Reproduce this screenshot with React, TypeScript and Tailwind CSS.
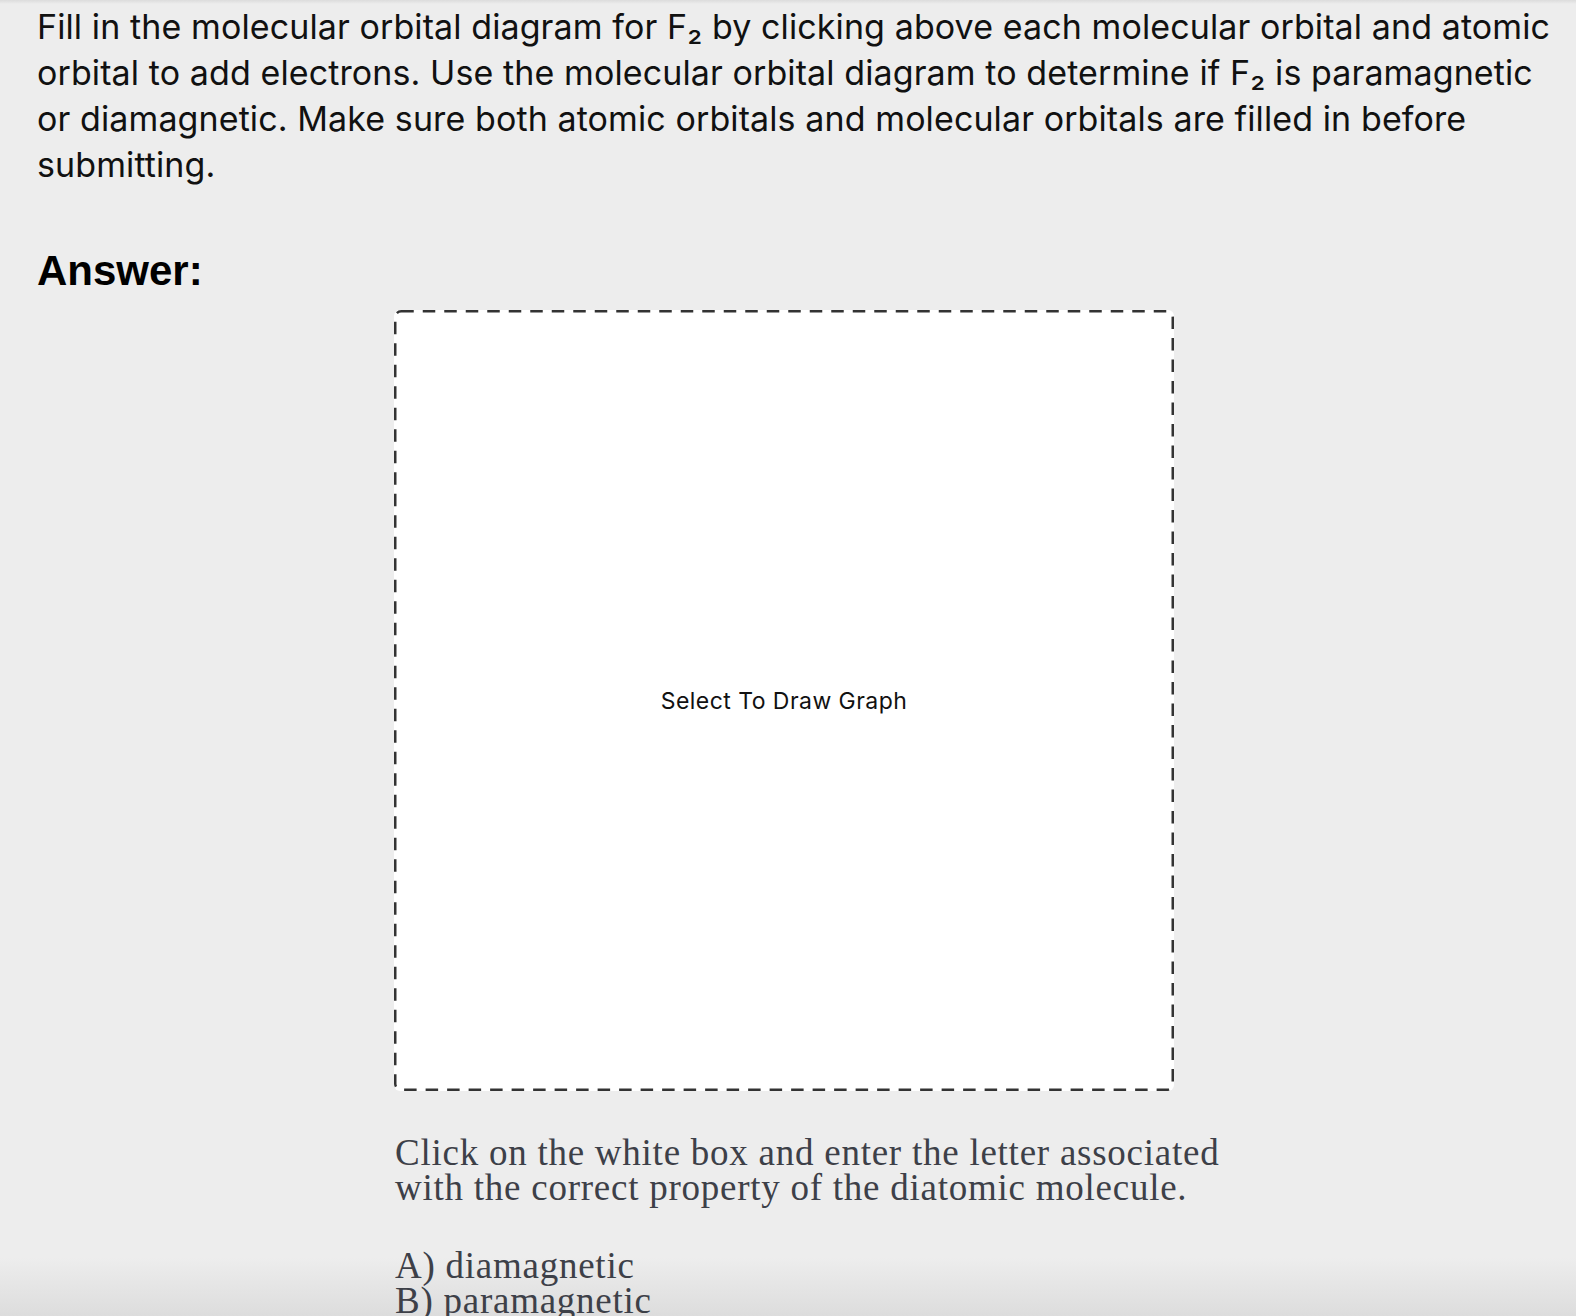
import React from "react";

export default function App() {
  return (
    <div className="relative min-h-[1316px] w-[1576px] overflow-hidden bg-[#ededed]">
      <div className="pointer-events-none absolute inset-x-0 top-0 h-[4px] bg-gradient-to-b from-[#dcdcdc] to-[#ededed]" />
      <div className="pointer-events-none absolute inset-x-0 bottom-0 h-[60px] bg-gradient-to-b from-[#ededed] to-[#dcdcdc]" />
      <div className="relative pl-[37px] pt-[4px]">
        <p className="whitespace-nowrap text-[34px] leading-[46px] text-[#111] [font-family:Inter,'Noto_Sans',sans-serif] tracking-[0.1px]">
          Fill in the molecular orbital diagram for F₂ by clicking above each molecular orbital and atomic
          <br />
          orbital to add electrons. Use the molecular orbital diagram to determine if F₂ is paramagnetic
          <br />
          or diamagnetic. Make sure both atomic orbitals and molecular orbitals are filled in before
          <br />
          submitting.
        </p>
        <h2 className="mt-[58px] text-[42px] font-bold leading-[50px] text-black [font-family:'Liberation_Sans',Arial,sans-serif]">
          Answer:
        </h2>
        <div className="relative ml-[357px] mt-[14px] flex h-[781px] w-[780px] items-center justify-center rounded-[6px] bg-white">
          <svg className="pointer-events-none absolute inset-0" width="780" height="781">
            <rect
              x="1.25"
              y="1.25"
              width="777.5"
              height="778.5"
              rx="6"
              fill="none"
              stroke="#333"
              strokeWidth="2.5"
              strokeDasharray="12.5 9"
            />
          </svg>
          <span className="pt-[2px] text-[23px] tracking-[0.45px] text-[#111] [font-family:Inter,sans-serif]">
            Select To Draw Graph
          </span>
        </div>
        <div className="ml-[358px] mt-[45px] text-[37px] leading-[34.5px] tracking-[0.75px] text-[#3d4048] [font-family:'Liberation_Serif','Times_New_Roman',serif]">
          <p>
            Click on the white box and enter the letter associated
            <br />
            with the correct property of the diatomic molecule.
          </p>
          <p className="mt-[44px]">A) diamagnetic</p>
          <p>B) paramagnetic</p>
        </div>
      </div>
    </div>
  );
}
